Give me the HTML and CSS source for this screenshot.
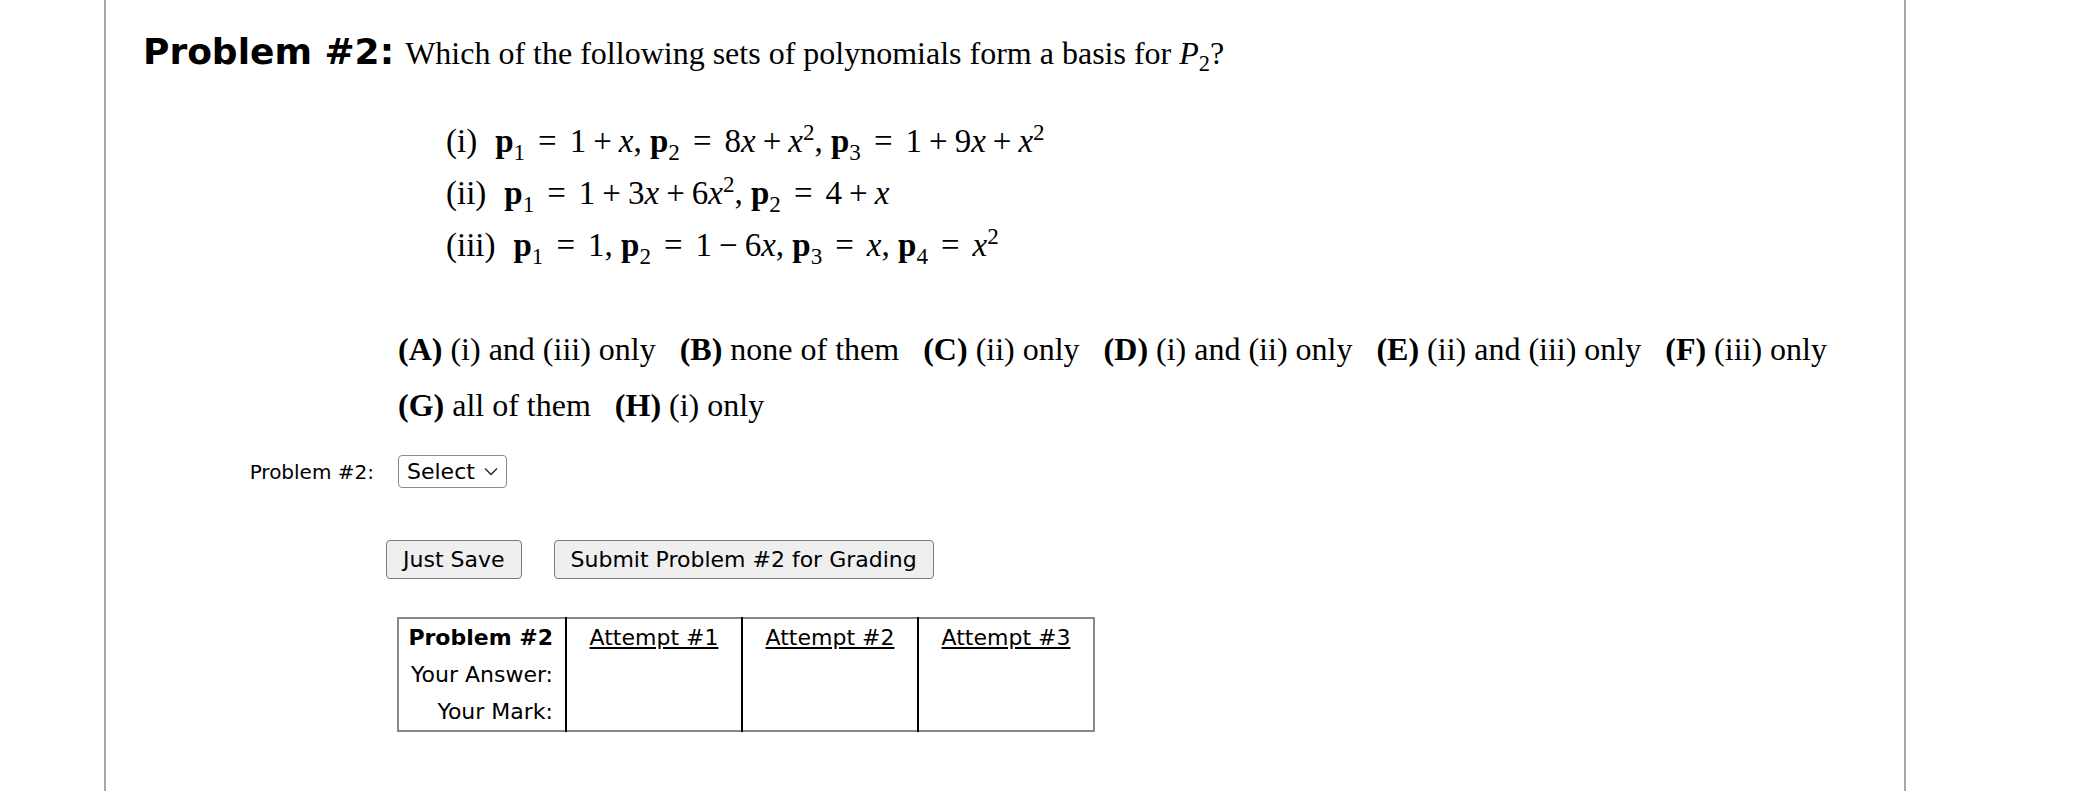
FILE: index.html
```html
<!DOCTYPE html>
<html lang="en">
<head>
    <title>Problem #2</title>
    <meta charset="UTF-8">
    <link rel="stylesheet" href="styles.css">
</head>
<body>
<div class="page">
    <div class="question">
        <span class="qnum">Problem #2:</span>
        <span class="qtext">Which of the following sets of polynomials form a basis for <i>P</i><sub>2</sub>?</span>
    </div>

    <div class="sets">
        <div class="set"><span class="lbl">(i)</span><b>p</b><sub>1</sub><span class="rel">=</span>1<span class="bin">+</span><i>x</i>, <b>p</b><sub>2</sub><span class="rel">=</span>8<i>x</i><span class="bin">+</span><i>x</i><sup>2</sup>, <b>p</b><sub>3</sub><span class="rel">=</span>1<span class="bin">+</span>9<i>x</i><span class="bin">+</span><i>x</i><sup>2</sup></div>
        <div class="set"><span class="lbl">(ii)</span><b>p</b><sub>1</sub><span class="rel">=</span>1<span class="bin">+</span>3<i>x</i><span class="bin">+</span>6<i>x</i><sup>2</sup>, <b>p</b><sub>2</sub><span class="rel">=</span>4<span class="bin">+</span><i>x</i></div>
        <div class="set"><span class="lbl">(iii)</span><b>p</b><sub>1</sub><span class="rel">=</span>1, <b>p</b><sub>2</sub><span class="rel">=</span>1<span class="bin">&minus;</span>6<i>x</i>, <b>p</b><sub>3</sub><span class="rel">=</span><i>x</i>, <b>p</b><sub>4</sub><span class="rel">=</span><i>x</i><sup>2</sup></div>
    </div>

    <div class="choices">
        <span class="choice"><b>(A)</b> (i) and (iii) only</span>
        <span class="choice"><b>(B)</b> none of them</span>
        <span class="choice"><b>(C)</b> (ii) only</span>
        <span class="choice"><b>(D)</b> (i) and (ii) only</span>
        <span class="choice"><b>(E)</b> (ii) and (iii) only</span>
        <span class="choice"><b>(F)</b> (iii) only</span>
        <span class="choice"><b>(G)</b> all of them</span>
        <span class="choice"><b>(H)</b> (i) only</span>
    </div>

    <div class="answer">
        <span class="answer-label">Problem #2:</span>
        <div class="select">
            <span>Select</span>
            <svg width="14" height="9" viewBox="0 0 14 9"><path d="M1 1.5 L7 7.5 L13 1.5" fill="none" stroke="#222" stroke-width="1.3"/></svg>
        </div>
    </div>

    <div class="buttons">
        <button class="btn">Just Save</button>
        <button class="btn">Submit Problem #2 for Grading</button>
    </div>

    <table class="attempts">
        <tr>
            <th class="rowhead">Problem #2</th>
            <td class="att"><a href="#">Attempt #1</a></td>
            <td class="att"><a href="#">Attempt #2</a></td>
            <td class="att"><a href="#">Attempt #3</a></td>
        </tr>
        <tr>
            <td class="rowhead">Your Answer:</td>
            <td class="att"></td>
            <td class="att"></td>
            <td class="att"></td>
        </tr>
        <tr>
            <td class="rowhead">Your Mark:</td>
            <td class="att"></td>
            <td class="att"></td>
            <td class="att"></td>
        </tr>
    </table>
</div>
</body>
</html>
```

FILE: styles.css
```css
body {
    margin: 0;
    background: white;
    color: black;
    font-family: "DejaVu Sans", Verdana, sans-serif;
}

.page {
    margin-left: 104px;
    width: 1798px;
    min-height: 100vh;
    border-left: 2px solid #a8a8a8;
    border-right: 2px solid #a8a8a8;
}

.question {
    padding: 31px 0 0 37px;
    white-space: nowrap;
}

.qnum {
    font-weight: bold;
    font-size: 36px;
    margin-right: 6px;
}

.qtext {
    font-family: "Liberation Serif", "Times New Roman", serif;
    font-size: 32px;
}

sub, sup {
    font-size: 70%;
    line-height: 0;
}

.sets {
    margin: 43px 0 0 340px;
    font-family: "Liberation Serif", "Times New Roman", serif;
    font-size: 33px;
}

.set {
    height: 52px;
    line-height: 52px;
}

.lbl {
    margin-right: 18px;
}

.rel {
    margin: 0 13px;
}

.bin {
    margin: 0 7px;
}

.choices {
    margin: 50px 0 0 292px;
    width: 1490px;
    font-family: "Liberation Serif", "Times New Roman", serif;
    font-size: 32px;
    line-height: 56px;
}

.choice {
    white-space: nowrap;
    margin-right: 16px;
}

.answer {
    display: flex;
    align-items: center;
    gap: 24px;
    margin-top: 22px;
}

.answer-label {
    width: 268px;
    text-align: right;
    font-size: 20px;
}

.select {
    display: flex;
    align-items: center;
    gap: 9px;
    height: 31px;
    padding: 0 8px;
    border: 1.5px solid #8a8a8a;
    border-radius: 4px;
    font-size: 22px;
}

.buttons {
    display: flex;
    gap: 32px;
    margin: 52px 0 0 280px;
}

.btn {
    font-family: "DejaVu Sans", Verdana, sans-serif;
    font-size: 22px;
    height: 39px;
    padding: 0 16px;
    background: #efefef;
    border: 1.5px solid #7a7a7a;
    border-radius: 4px;
    color: black;
}

.attempts {
    margin: 38px 0 0 291px;
    border-collapse: collapse;
    border: 2px solid #888;
    table-layout: fixed;
    font-size: 22px;
}

.attempts td, .attempts th {
    height: 37px;
    padding: 0 8px;
    vertical-align: middle;
}

.attempts .rowhead {
    width: 146px;
    text-align: right;
    padding-right: 12px;
}

.att {
    width: 158px;
    text-align: center;
    border-left: 2px solid black;
}

.att a {
    color: black;
}
```
